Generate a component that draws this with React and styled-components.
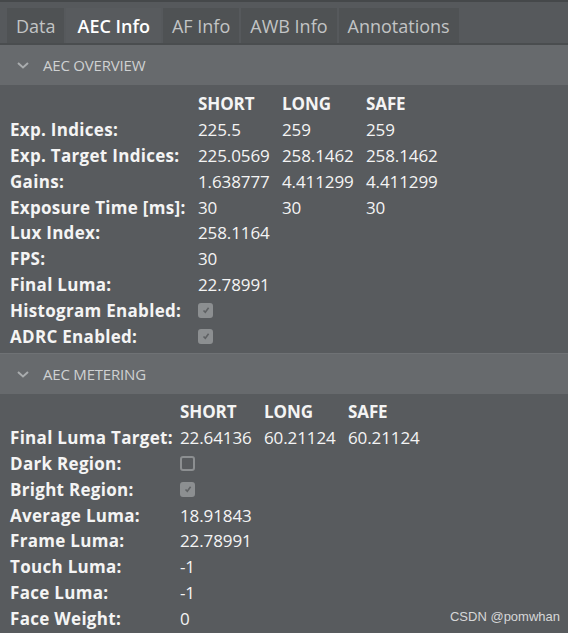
import React from "react";
import styled, { createGlobalStyle } from "styled-components";

const GlobalStyle = createGlobalStyle`
  html, body {
    margin: 0;
    padding: 0;
    background: #585b5e;
  }
  body {
    font-family: "Open Sans", "Noto Sans", sans-serif;
  }
`;

const Window = styled.div`
  position: relative;
  width: 568px;
  height: 633px;
  overflow: hidden;
  background: #585b5e;
  border-top: 2px solid #45484a;
  box-sizing: border-box;
`;

const TabBar = styled.div`
  display: flex;
  align-items: flex-end;
  gap: 2px;
  height: 43px;
  padding: 0 0 0 7px;
  background: #56595c;
  border-bottom: 2px solid #4a4d4f;
  box-sizing: border-box;
`;

const Tab = styled.div`
  height: 35px;
  padding: 0 ${(p) => (p.$active ? 11 : 9)}px;
  display: flex;
  align-items: center;
  font-size: 18px;
  color: ${(p) => (p.$active ? "#ffffff" : "#c2c4c5")};
  background: ${(p) => (p.$active ? "#585b5e" : "#4f5254")};
  font-weight: ${(p) => (p.$active ? 600 : 400)};
`;

const SectionHeader = styled.div`
  display: flex;
  align-items: center;
  gap: 13px;
  height: 40px;
  padding-left: 16px;
  background: #676a6d;
  border-top: ${(p) => (p.$divider ? "1px solid #6f7275" : "none")};
  color: #cfd1d2;
  font-size: 15px;
  letter-spacing: -0.2px;
  text-transform: uppercase;
`;

const Chevron = () => (
  <svg width="14" height="10" viewBox="0 0 14 10">
    <path d="M2 3 L7 7.5 L12 3" fill="none" stroke="#a9acae" strokeWidth="2" />
  </svg>
);

const Grid = styled.div`
  display: grid;
  grid-template-columns: ${(p) => p.$label}px 84px 84px 84px;
  grid-auto-rows: 25.8px;
  align-items: center;
  padding: ${(p) => p.$pad};
  color: #f4f4f4;
  font-size: 17px;
  letter-spacing: -0.1px;
`;

const Label = styled.div`
  font-weight: 700;
  white-space: nowrap;
  letter-spacing: 0.3px;
`;

const ColHead = styled.div`
  font-weight: 700;
`;

const Value = styled.div`
  white-space: nowrap;
`;

const Box = styled.div`
  width: 15px;
  height: 15px;
  border-radius: 3px;
  box-sizing: border-box;
  border: 2px solid #8c8f91;
  background: ${(p) => (p.$checked ? "#8c8f91" : "transparent")};
  display: flex;
  align-items: center;
  justify-content: center;
`;

const Check = ({ checked }) => (
  <Box $checked={checked}>
    {checked && (
      <svg width="10" height="10" viewBox="0 0 10 10">
        <path d="M2.5 5.5 L4.3 7.2 L7.6 2.8" fill="none" stroke="#5f6264" strokeWidth="1.6" />
      </svg>
    )}
  </Box>
);

const Watermark = styled.div`
  position: absolute;
  right: 8px;
  bottom: 9px;
  font-family: "Liberation Sans", Arial, sans-serif;
  font-size: 13px;
  color: #d6d7d8;
`;

const overview = [
  ["Exp. Indices:", "225.5", "259", "259"],
  ["Exp. Target Indices:", "225.0569", "258.1462", "258.1462"],
  ["Gains:", "1.638777", "4.411299", "4.411299"],
  ["Exposure Time [ms]:", "30", "30", "30"],
  ["Lux Index:", "258.1164"],
  ["FPS:", "30"],
  ["Final Luma:", "22.78991"],
  ["Histogram Enabled:", true],
  ["ADRC Enabled:", true],
];

const metering = [
  ["Final Luma Target:", "22.64136", "60.21124", "60.21124"],
  ["Dark Region:", false],
  ["Bright Region:", true],
  ["Average Luma:", "18.91843"],
  ["Frame Luma:", "22.78991"],
  ["Touch Luma:", "-1"],
  ["Face Luma:", "-1"],
  ["Face Weight:", "0"],
];

function Rows({ rows }) {
  return rows.map(([label, ...vals]) => (
    <React.Fragment key={label}>
      <Label>{label}</Label>
      {typeof vals[0] === "boolean" ? (
        <>
          <Value>
            <Check checked={vals[0]} />
          </Value>
          <span />
          <span />
        </>
      ) : (
        [0, 1, 2].map((i) => <Value key={i}>{vals[i] || ""}</Value>)
      )}
    </React.Fragment>
  ));
}

const Heads = () => (
  <>
    <span />
    <ColHead>SHORT</ColHead>
    <ColHead>LONG</ColHead>
    <ColHead>SAFE</ColHead>
  </>
);

export default function App() {
  const tabs = ["Data", "AEC Info", "AF Info", "AWB Info", "Annotations"];
  return (
    <Window>
      <GlobalStyle />
      <TabBar>
        {tabs.map((t) => (
          <Tab key={t} $active={t === "AEC Info"}>
            {t}
          </Tab>
        ))}
      </TabBar>
      <SectionHeader>
        <Chevron />
        AEC Overview
      </SectionHeader>
      <Grid $label={188} $pad="6px 0 4px 10px">
        <Heads />
        <Rows rows={overview} />
      </Grid>
      <SectionHeader $divider>
        <Chevron />
        AEC Metering
      </SectionHeader>
      <Grid $label={170} $pad="5px 0 0 10px">
        <Heads />
        <Rows rows={metering} />
      </Grid>
      <Watermark>CSDN @pomwhan</Watermark>
    </Window>
  );
}
